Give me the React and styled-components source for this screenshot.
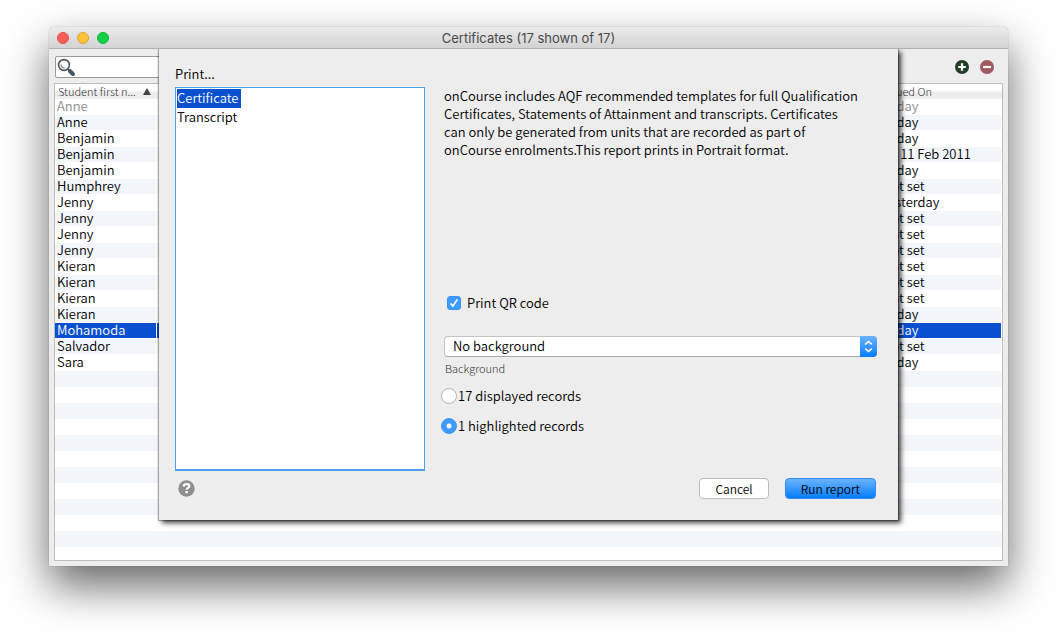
import { useState } from "react";
import styled, { createGlobalStyle } from "styled-components";

const GlobalStyle = createGlobalStyle`
  * {
    box-sizing: border-box;
  }
  body {
    margin: 0;
    background: #fff;
    color: #000;
    font-family: "Noto Sans CJK SC", "Open Sans", sans-serif;
    font-size: 13px;
    font-weight: 350;
    line-height: 18px;
  }
  button,
  input,
  select {
    margin: 0;
    font: inherit;
    color: inherit;
  }
`;

const Desktop = styled.div`
  min-height: 100vh;
  display: flex;
  flex-direction: column;
  padding: 27px 48px 74px 49px;
`;

const Window = styled.main`
  flex: 1;
  display: flex;
  flex-direction: column;
  background: #ededed;
  border-radius: 5px 5px 0 0;
  box-shadow: 0 0 1px rgba(0, 0, 0, 0.5), 0 20px 44px rgba(0, 0, 0, 0.6);
`;

const TitleBar = styled.header`
  height: 22px;
  display: grid;
  grid-template-columns: 1fr auto 1fr;
  align-items: center;
  padding: 0 8px;
  border-bottom: 1px solid #b0b0b0;
  border-radius: 5px 5px 0 0;
  background: linear-gradient(#ebebeb, #d3d3d3);
`;

const Lights = styled.div`
  display: flex;
  gap: 8px;
`;

const Light = styled.button`
  width: 12px;
  height: 12px;
  padding: 0;
  border: 1px solid ${(props) => props.$edge};
  border-radius: 50%;
  background: ${(props) => props.$fill};
`;

const Title = styled.h1`
  margin: 0;
  color: #4a4a4a;
  font-family: "Inter", "Liberation Sans", sans-serif;
  font-size: 13px;
  font-weight: 400;
`;

const Content = styled.div`
  position: relative;
  flex: 1;
  display: flex;
  flex-direction: column;
  gap: 5px;
  padding: 7px 5px 5px;
`;

const Toolbar = styled.div`
  display: flex;
  justify-content: space-between;
  align-items: center;
  padding: 0 9px 0 1px;
`;

const SearchBox = styled.label`
  width: 240px;
  height: 22px;
  display: flex;
  align-items: center;
  gap: 4px;
  padding: 0 1px;
  border: 1px solid #999;
  border-radius: 2px;
  background: #fff;
`;

const SearchInput = styled.input`
  flex: 1;
  min-width: 0;
  border: none;
  outline: none;
  background: transparent;
`;

const ToolButtons = styled.div`
  display: flex;
  gap: 11px;
`;

const IconButton = styled.button`
  display: flex;
  padding: 0;
  border: none;
  background: none;
`;

const TablePanel = styled.div`
  flex: 1;
  border: 1px solid #bdbdbd;
  background: repeating-linear-gradient(#fff 0 16px, #f2f6fb 16px 32px) 0 15px;
`;

const Table = styled.table`
  width: 100%;
  table-layout: fixed;
  border-collapse: separate;
  border-spacing: 0;
  background: #fff;
`;

const HeadCell = styled.th`
  height: 15px;
  padding: 0 3px 1px;
  background: linear-gradient(#fff 40%, #ebebeb 60%, #f0f0f0);
  color: #333;
  font-size: 11px;
  font-weight: 300;
  line-height: 14px;
  text-align: left;
  white-space: nowrap;
`;

const HeadLabel = styled.span`
  display: flex;
  justify-content: space-between;
  align-items: center;
  padding-right: 3px;
`;

const Row = styled.tr`
  color: ${(props) => (props.$selected ? "#fff" : props.$muted ? "#8c8c8c" : "#000")};
  background: ${(props) => (props.$selected ? "#0850d0" : "#fff")};

  &:nth-child(even) {
    background: #f2f6fb;
  }
`;

const Cell = styled.td`
  height: 16px;
  padding: 0 2px 1px;
  border-right: 1px solid #fff;
  border-bottom: 1px solid #fff;
  line-height: 14px;
  white-space: nowrap;
`;

const Sheet = styled.form`
  position: absolute;
  top: 0;
  left: 110px;
  right: 110px;
  display: flex;
  flex-direction: column;
  padding: 16px 21px 21px 16px;
  background: #ededed;
  box-shadow: 0 0 1px 1px rgba(0, 0, 0, 0.3), 3px 3px 5px rgba(0, 0, 0, 0.75);
  clip-path: inset(0 -12px -12px -6px);
`;

const Columns = styled.div`
  display: grid;
  grid-template-columns: 250px 1fr;
  gap: 19px;
`;

const ListTitle = styled.h2`
  margin: 0 0 4px;
  font-size: 13px;
  font-weight: 350;
  line-height: 18px;
`;

const List = styled.ul`
  height: 384px;
  margin: 0;
  padding: 1px;
  border: 1px solid #4a9fe8;
  border-bottom-width: 2px;
  background: #fff;
  list-style: none;
`;

const Option = styled.li`
  width: fit-content;
  padding: 0 3px 2px 0;
  line-height: 17px;
  cursor: default;
  color: ${(props) => (props.$selected ? "#fff" : "#000")};
  background: ${(props) => (props.$selected ? "#0850d0" : "transparent")};
`;

const Settings = styled.div`
  display: flex;
  flex-direction: column;
`;

const Description = styled.p`
  height: 207px;
  margin: 0;
  padding-right: 16px;
`;

const CheckLabel = styled.label`
  display: flex;
  align-items: center;
  gap: 6px;
  padding-left: 3px;
`;

const Stack = styled.span`
  display: inline-grid;
  place-items: center;

  & > * {
    grid-area: 1 / 1;
  }

  svg {
    pointer-events: none;
  }
`;

const Checkbox = styled.input`
  appearance: none;
  width: 14px;
  height: 14px;
  border: 1px solid #b5b5b5;
  border-radius: 3px;
  background: #fff;

  &:checked {
    border-color: #3a94f8;
    background: #3f9bff;
  }
  &:not(:checked) + svg {
    display: none;
  }
`;

const SelectBox = styled.div`
  display: grid;
  align-items: center;
  margin-top: 24px;
  border-radius: 4px;

  & > * {
    grid-area: 1 / 1;
  }
`;

const Select = styled.select`
  appearance: none;
  width: 100%;
  height: 21px;
  padding: 0 24px 2px 8px;
  border: 1px solid #c4c4c4;
  border-bottom-color: #aaa;
  border-radius: 4px;
  background: #fff;
  line-height: 18px;
`;

const SelectArrows = styled.span`
  justify-self: end;
  width: 17px;
  height: 21px;
  display: grid;
  place-items: center;
  border-radius: 0 4px 4px 0;
  background: linear-gradient(#6bb3fa, #067dff);
  pointer-events: none;
`;

const Caption = styled.label`
  margin-top: 2px;
  padding-left: 1px;
  color: #333;
  font-size: 11px;
  font-weight: 300;
`;

const RadioGroup = styled.div`
  display: flex;
  flex-direction: column;
  gap: 12px;
  margin: 10px 0 0 -3px;
`;

const RadioLabel = styled.label`
  display: flex;
  align-items: center;
  gap: 1px;
`;

const Radio = styled.input`
  appearance: none;
  width: 16px;
  height: 16px;
  border: 1px solid #b5b5b5;
  border-radius: 50%;
  background: #fff;

  &:checked {
    border-color: #3a94f8;
    background: radial-gradient(circle, #fff 0 2px, #3f9bff 3px);
  }
`;

const Footer = styled.footer`
  display: flex;
  align-items: center;
  gap: 16px;
  margin-top: 7px;
  padding: 0 1px 0 3px;
`;

const HelpButton = styled(IconButton)`
  margin-right: auto;
`;

const Button = styled.button`
  height: 21px;
  padding: 0 15px;
  border: 1px solid ${(props) => (props.$primary ? "#2f8cf5" : "#bdbdbd")};
  border-radius: 4px;
  background: ${(props) =>
    props.$primary ? "linear-gradient(#6bb3fa, #067dff)" : "#fff"};
  font-size: 12px;
  line-height: 18px;
`;

const records = [
  ["Anne", "Today"],
  ["Anne", "Today"],
  ["Benjamin", "Today"],
  ["Benjamin", "Fri 11 Feb 2011"],
  ["Benjamin", "Today"],
  ["Humphrey", "Not set"],
  ["Jenny", "Yesterday"],
  ["Jenny", "Not set"],
  ["Jenny", "Not set"],
  ["Jenny", "Not set"],
  ["Kieran", "Not set"],
  ["Kieran", "Not set"],
  ["Kieran", "Not set"],
  ["Kieran", "Today"],
  ["Mohamoda", "Today"],
  ["Salvador", "Not set"],
  ["Sara", "Today"],
];

const reports = ["Certificate", "Transcript"];

const SearchIcon = () => (
  <svg width="19" height="19" viewBox="0 0 19 19" fill="none">
    <circle cx="7" cy="7" r="5.4" stroke="#4a545c" strokeWidth="1.6" />
    <path d="M4.2 6.4a2.9 2.9 0 0 0 3.4 3.4" stroke="#7d868c" strokeWidth="1.2" />
    <path d="M10.8 10.8l2 2" stroke="#4a545c" strokeWidth="1.6" />
    <path d="M12.9 13l3 3" stroke="#4a545c" strokeWidth="4" strokeLinecap="round" />
  </svg>
);

const CircleIcon = ({ fill, path }) => (
  <svg width="14" height="14" viewBox="0 0 14 14">
    <circle cx="7" cy="7" r="7" fill={fill} />
    <path d={path} stroke="#fff" strokeWidth="2.2" />
  </svg>
);

const RecordTable = () => (
  <TablePanel>
    <Table>
      <colgroup>
        <col style={{ width: 102 }} />
        <col />
        <col style={{ width: 122 }} />
      </colgroup>
      <thead>
        <tr>
          <HeadCell>
            <HeadLabel>
              Student first n...
              <svg width="8" height="7" viewBox="0 0 8 7">
                <path d="M4 0l4 7H0z" fill="#444" />
              </svg>
            </HeadLabel>
          </HeadCell>
          <HeadCell />
          <HeadCell>Issued On</HeadCell>
        </tr>
      </thead>
      <tbody>
        {records.map(([name, issued], index) => (
          <Row key={index} $muted={index === 0} $selected={index === 14}>
            <Cell>{name}</Cell>
            <Cell />
            <Cell>{issued}</Cell>
          </Row>
        ))}
      </tbody>
    </Table>
  </TablePanel>
);

const PrintSheet = () => {
  const [report, setReport] = useState("Certificate");

  return (
    <Sheet onSubmit={(e) => e.preventDefault()}>
      <ListTitle id="print-title">Print...</ListTitle>
      <Columns>
        <List role="listbox" aria-labelledby="print-title">
          {reports.map((item) => (
            <Option
              key={item}
              role="option"
              tabIndex={0}
              aria-selected={item === report}
              $selected={item === report}
              onClick={() => setReport(item)}
            >
              {item}
            </Option>
          ))}
        </List>

        <Settings>
          <Description>
            onCourse includes AQF recommended templates for full Qualification
            Certificates, Statements of Attainment and transcripts. Certificates
            can only be generated from units that are recorded as part of
            onCourse enrolments.This report prints in Portrait format.
          </Description>

          <CheckLabel>
            <Stack>
              <Checkbox type="checkbox" defaultChecked />
              <svg width="10" height="10" viewBox="0 0 10 10" fill="none">
                <path d="M1.6 5.4l2.3 2.7 4.4-6.6" stroke="#fff" strokeWidth="1.6" />
              </svg>
            </Stack>
            Print QR code
          </CheckLabel>

          <SelectBox>
            <Select id="background">
              <option>No background</option>
            </Select>
            <SelectArrows>
              <svg width="9" height="13" viewBox="0 0 9 13" fill="none">
                <path
                  d="M1.2 4.4l3.3-3 3.3 3M1.2 8.6l3.3 3 3.3-3"
                  stroke="#fff"
                  strokeWidth="1.5"
                />
              </svg>
            </SelectArrows>
          </SelectBox>
          <Caption htmlFor="background">Background</Caption>

          <RadioGroup>
            <RadioLabel>
              <Radio type="radio" name="records" />
              17 displayed records
            </RadioLabel>
            <RadioLabel>
              <Radio type="radio" name="records" defaultChecked />
              1 highlighted records
            </RadioLabel>
          </RadioGroup>
        </Settings>
      </Columns>

      <Footer>
        <HelpButton type="button" aria-label="Help">
          <svg width="17" height="17" viewBox="0 0 17 17" fill="none">
            <circle cx="8.5" cy="8.5" r="8.2" fill="#8e8e8e" />
            <path
              d="M5.7 6.5c.1-1.7 1.2-2.4 2.8-2.4s2.8.8 2.8 2.1c0 1.8-2.6 1.7-2.6 3.6"
              stroke="#fff"
              strokeWidth="2.2"
            />
            <path d="M7.4 11h2.5v2.3H7.4z" fill="#fff" />
          </svg>
        </HelpButton>
        <Button type="button">Cancel</Button>
        <Button type="submit" $primary>
          Run report
        </Button>
      </Footer>
    </Sheet>
  );
};

const App = () => {
  return (
    <>
      <GlobalStyle />
      <Desktop>
        <Window>
          <TitleBar>
            <Lights>
              <Light aria-label="Close" $fill="#ff5f5a" $edge="#e2504b" />
              <Light aria-label="Minimize" $fill="#fdc23c" $edge="#dfa32f" />
              <Light aria-label="Zoom" $fill="#12d045" $edge="#0fb53a" />
            </Lights>
            <Title>Certificates (17 shown of 17)</Title>
          </TitleBar>
          <Content>
            <Toolbar>
              <SearchBox>
                <SearchIcon />
                <SearchInput type="search" aria-label="Search" />
              </SearchBox>
              <ToolButtons>
                <IconButton aria-label="Add">
                  <CircleIcon fill="#213f26" path="M7 3.2v7.6M3.2 7h7.6" />
                </IconButton>
                <IconButton aria-label="Remove">
                  <CircleIcon fill="#9f5a5f" path="M3 7h8" />
                </IconButton>
              </ToolButtons>
            </Toolbar>
            <RecordTable />
            <PrintSheet />
          </Content>
        </Window>
      </Desktop>
    </>
  );
};

export default App;
